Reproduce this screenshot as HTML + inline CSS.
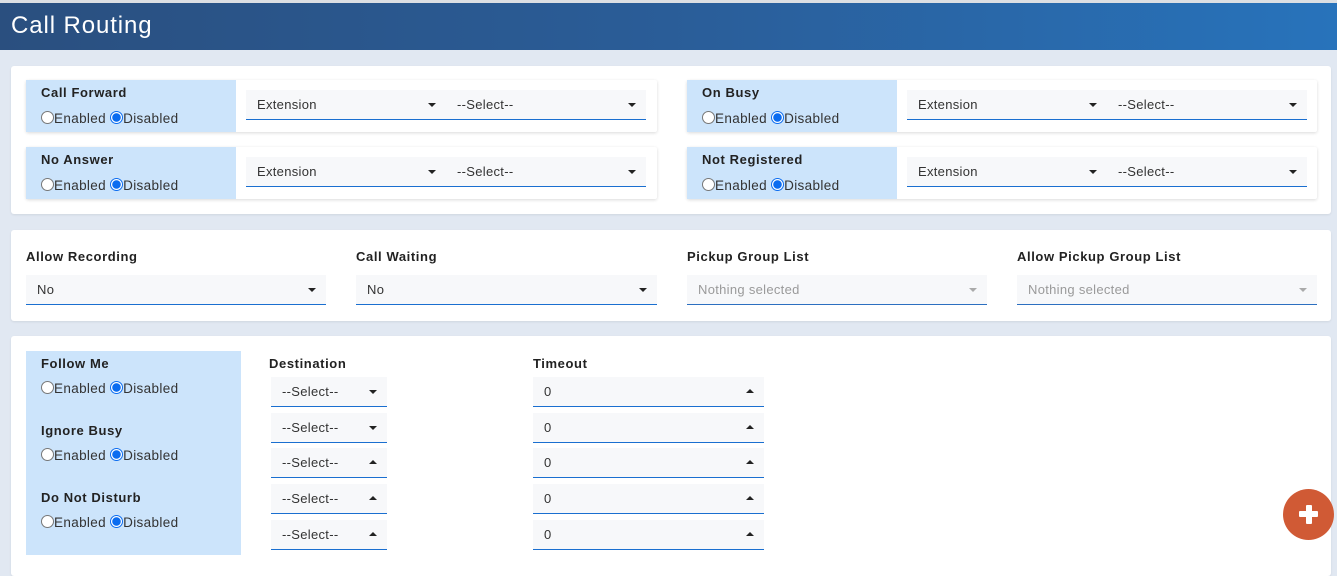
<!DOCTYPE html>
<html><head><meta charset="utf-8"><style>
*{box-sizing:border-box;margin:0;padding:0}
body{width:1337px;height:568px;overflow:hidden;background:#e1e8f2;font-family:"Liberation Sans",sans-serif;font-size:13px;color:#333;position:relative;letter-spacing:.3px}
.a{position:absolute}
.hdr{left:0;top:0;width:1337px;height:50px;border-top:3px solid #dcdfe3;background:linear-gradient(90deg,#2a4f7f,#2a5d98 50%,#2873bb)}
.hdr span{position:absolute;left:11px;top:9px;color:#fff;font-size:24px;letter-spacing:.9px}
.card{background:#fff;border-radius:3px;box-shadow:0 1px 2px rgba(0,0,0,.08)}
.row{background:#fff;box-shadow:0 1px 3px rgba(0,0,0,.15);border-radius:2px}
.lab{background:#cce4fb}
.t{font-weight:bold;color:#222;font-size:13px;letter-spacing:.6px}
.sel{background:#f7f8fa;border-bottom:1.5px solid #1a6fd0;height:30px;line-height:29px;padding-left:11px;color:#333}
.sel.d{color:#9a9a9a;border-bottom-color:#2c6fc0}
.c{position:absolute;right:10px;top:13px;width:0;height:0;border-left:4px solid transparent;border-right:4px solid transparent;border-top:4px solid #222}
.c.u{border-top:none;border-bottom:4px solid #222;top:12px}
.c.g{border-top-color:#aaa}
.rad{font-size:13.5px;color:#333;white-space:nowrap;letter-spacing:.35px}
.r{display:inline-block;width:13px;height:13px;border-radius:50%;border:1px solid #777;background:#fff;vertical-align:-1px;margin-right:0}
.r.on{border:1px solid #0b6cf0;background:radial-gradient(circle,#0b6cf0 4px,#fff 4.5px)}
.fab{left:1283px;top:489px;width:51px;height:51px;border-radius:50%;background:#d05a35}
</style></head><body>
<div class="a hdr"><span>Call Routing</span></div>

<div class="a card" style="left:11px;top:66px;width:1320px;height:148px"></div>
<div class="a row" style="left:26px;top:80px;width:631px;height:52px"></div>
<div class="a row" style="left:26px;top:147px;width:631px;height:52px"></div>
<div class="a row" style="left:687px;top:80px;width:630px;height:52px"></div>
<div class="a row" style="left:687px;top:147px;width:630px;height:52px"></div>

<div class="a lab" style="left:26px;top:80px;width:210px;height:52px"></div>
<div class="a t" style="left:41px;top:85px">Call Forward</div>
<div class="a rad" style="left:41px;top:111px"><span class="r"></span>Enabled <span class="r on"></span>Disabled</div>
<div class="a sel" style="left:246px;top:90px;width:200px">Extension<i class="c"></i></div>
<div class="a sel" style="left:446px;top:90px;width:200px">--Select--<i class="c"></i></div>

<div class="a lab" style="left:26px;top:147px;width:210px;height:52px"></div>
<div class="a t" style="left:41px;top:152px">No Answer</div>
<div class="a rad" style="left:41px;top:178px"><span class="r"></span>Enabled <span class="r on"></span>Disabled</div>
<div class="a sel" style="left:246px;top:157px;width:200px">Extension<i class="c"></i></div>
<div class="a sel" style="left:446px;top:157px;width:200px">--Select--<i class="c"></i></div>

<div class="a lab" style="left:687px;top:80px;width:210px;height:52px"></div>
<div class="a t" style="left:702px;top:85px">On Busy</div>
<div class="a rad" style="left:702px;top:111px"><span class="r"></span>Enabled <span class="r on"></span>Disabled</div>
<div class="a sel" style="left:907px;top:90px;width:200px">Extension<i class="c"></i></div>
<div class="a sel" style="left:1107px;top:90px;width:200px">--Select--<i class="c"></i></div>

<div class="a lab" style="left:687px;top:147px;width:210px;height:52px"></div>
<div class="a t" style="left:702px;top:152px">Not Registered</div>
<div class="a rad" style="left:702px;top:178px"><span class="r"></span>Enabled <span class="r on"></span>Disabled</div>
<div class="a sel" style="left:907px;top:157px;width:200px">Extension<i class="c"></i></div>
<div class="a sel" style="left:1107px;top:157px;width:200px">--Select--<i class="c"></i></div>

<div class="a card" style="left:11px;top:230px;width:1320px;height:91px"></div>
<div class="a t" style="left:26px;top:249px">Allow Recording</div>
<div class="a sel" style="left:26px;top:275px;width:300px">No<i class="c"></i></div>
<div class="a t" style="left:356px;top:249px">Call Waiting</div>
<div class="a sel" style="left:356px;top:275px;width:301px">No<i class="c"></i></div>
<div class="a t" style="left:687px;top:249px">Pickup Group List</div>
<div class="a sel d" style="left:687px;top:275px;width:300px">Nothing selected<i class="c g"></i></div>
<div class="a t" style="left:1017px;top:249px">Allow Pickup Group List</div>
<div class="a sel d" style="left:1017px;top:275px;width:300px">Nothing selected<i class="c g"></i></div>

<div class="a card" style="left:11px;top:336px;width:1320px;height:240px"></div>
<div class="a lab" style="left:26px;top:351px;width:215px;height:204px"></div>
<div class="a t" style="left:41px;top:356px">Follow Me</div>
<div class="a rad" style="left:41px;top:381px"><span class="r"></span>Enabled <span class="r on"></span>Disabled</div>
<div class="a t" style="left:41px;top:423px">Ignore Busy</div>
<div class="a rad" style="left:41px;top:448px"><span class="r"></span>Enabled <span class="r on"></span>Disabled</div>
<div class="a t" style="left:41px;top:490px">Do Not Disturb</div>
<div class="a rad" style="left:41px;top:515px"><span class="r"></span>Enabled <span class="r on"></span>Disabled</div>

<div class="a t" style="left:269px;top:356px">Destination</div>
<div class="a t" style="left:533px;top:356px">Timeout</div>
<div class="a sel" style="left:271px;top:377px;width:116px">--Select--<i class="c"></i></div>
<div class="a sel" style="left:271px;top:413px;width:116px">--Select--<i class="c"></i></div>
<div class="a sel" style="left:271px;top:448px;width:116px">--Select--<i class="c u"></i></div>
<div class="a sel" style="left:271px;top:484px;width:116px">--Select--<i class="c u"></i></div>
<div class="a sel" style="left:271px;top:520px;width:116px">--Select--<i class="c u"></i></div>
<div class="a sel" style="left:533px;top:377px;width:231px">0<i class="c u"></i></div>
<div class="a sel" style="left:533px;top:413px;width:231px">0<i class="c u"></i></div>
<div class="a sel" style="left:533px;top:448px;width:231px">0<i class="c u"></i></div>
<div class="a sel" style="left:533px;top:484px;width:231px">0<i class="c u"></i></div>
<div class="a sel" style="left:533px;top:520px;width:231px">0<i class="c u"></i></div>

<div class="a fab">
<div class="a" style="left:16px;top:22px;width:19px;height:6px;background:#fff;border-radius:1px"></div>
<div class="a" style="left:22.5px;top:16px;width:6px;height:19px;background:#fff;border-radius:1px"></div>
</div>
</body></html>
